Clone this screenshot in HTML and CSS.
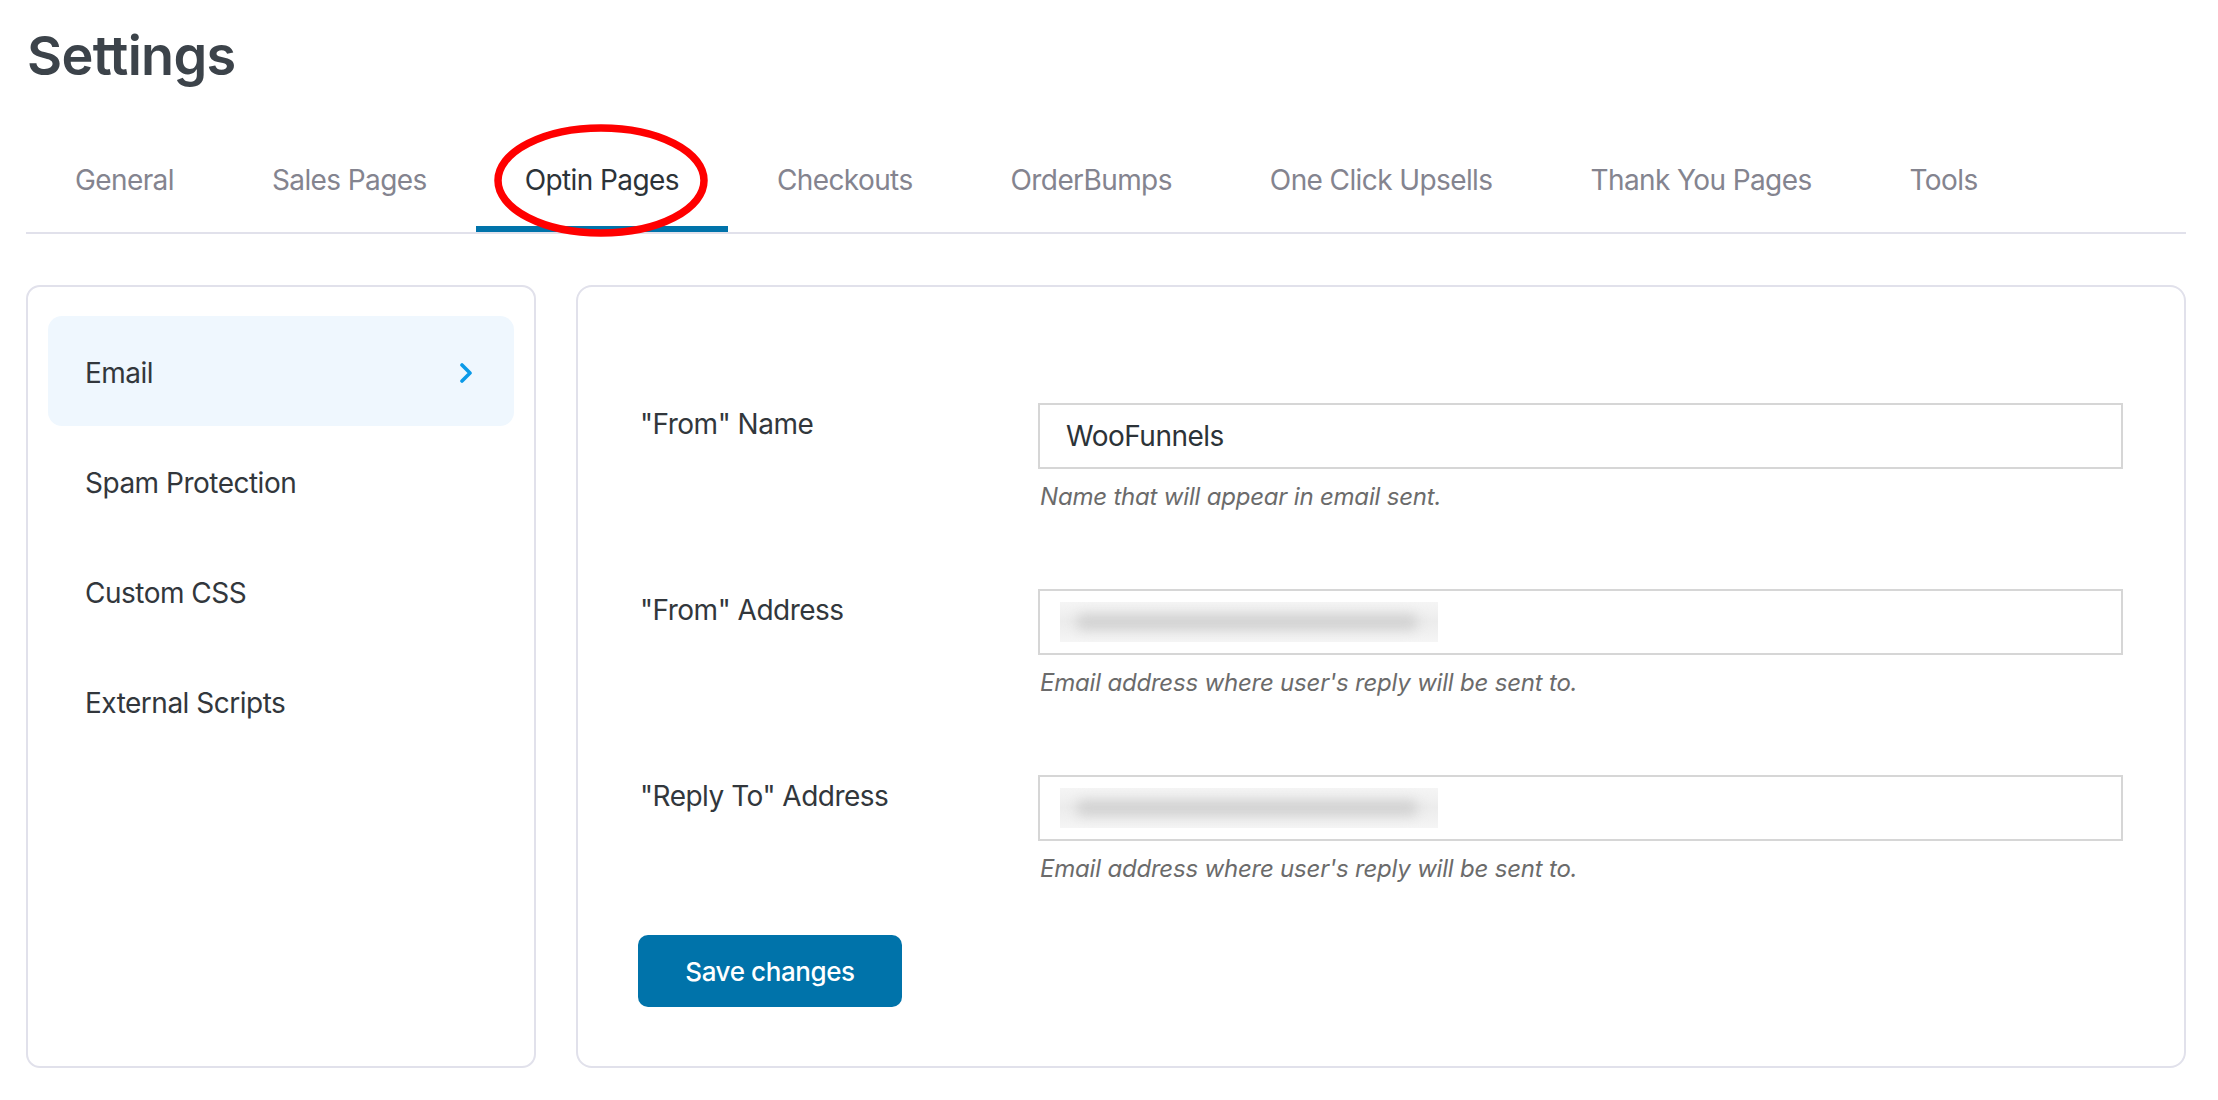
FILE: index.html
```html
<!DOCTYPE html>
<html lang="en">
<head>
<meta charset="utf-8">
<title>Settings</title>
<link rel="stylesheet" href="styles.css">
</head>
<body>
<div class="page">
  <h1 class="title">Settings</h1>
  <nav class="tabs">
    <a class="tab">General</a>
    <a class="tab">Sales Pages</a>
    <a class="tab active">Optin Pages<svg class="annot" width="214" height="113" viewBox="0 0 214 113"><ellipse cx="107" cy="56.5" rx="103" ry="52.5" fill="none" stroke="#ff0000" stroke-width="7.5"/></svg></a>
    <a class="tab">Checkouts</a>
    <a class="tab">OrderBumps</a>
    <a class="tab">One Click Upsells</a>
    <a class="tab">Thank You Pages</a>
    <a class="tab">Tools</a>
  </nav>
  <div class="content">
    <aside class="sidebar">
      <ul class="menu">
        <li class="menu-item active"><span>Email</span><svg class="chev" width="14" height="20" viewBox="0 0 14 20"><polyline points="3,2 11,10 3,18" fill="none" stroke="#0b9ae8" stroke-width="3.6" stroke-linecap="round" stroke-linejoin="round"/></svg></li>
        <li class="menu-item"><span>Spam Protection</span></li>
        <li class="menu-item"><span>Custom CSS</span></li>
        <li class="menu-item"><span>External Scripts</span></li>
      </ul>
    </aside>
    <section class="panel">
      <div class="form">
        <div class="form-row">
          <div class="label">"From" Name</div>
          <div class="control">
            <div class="field">WooFunnels</div>
            <p class="help">Name that will appear in email sent.</p>
          </div>
        </div>
        <div class="form-row">
          <div class="label">"From" Address</div>
          <div class="control">
            <div class="field"><div class="redacted"><div class="redacted-band"></div></div></div>
            <p class="help">Email address where user's reply will be sent to.</p>
          </div>
        </div>
        <div class="form-row">
          <div class="label">"Reply To" Address</div>
          <div class="control">
            <div class="field"><div class="redacted"><div class="redacted-band"></div></div></div>
            <p class="help">Email address where user's reply will be sent to.</p>
          </div>
        </div>
      </div>
      <button class="btn" type="button">Save changes</button>
    </section>
  </div>
</div>
</body>
</html>
```
FILE: styles.css
```css
* { box-sizing: border-box; }

html, body {
  margin: 0;
  padding: 0;
  background: #ffffff;
}

body {
  font-family: Inter, "Noto Sans", "Liberation Sans", sans-serif;
  color: #3c434a;
}

.page {
  padding: 24px 32px 0 26px;
}

.title {
  margin: 0 0 48px 1px;
  font-size: 54px;
  line-height: 64px;
  font-weight: 600;
  color: #3c434a;
  letter-spacing: -0.7px;
}

.tabs {
  display: flex;
  border-bottom: 2px solid #e1e1eb;
}

.tab {
  position: relative;
  display: block;
  padding: 24px 49px 26px;
  font-size: 28px;
  line-height: 40px;
  color: #84848f;
  border-bottom: 6px solid transparent;
  text-decoration: none;
  letter-spacing: -0.6px;
  white-space: nowrap;
}

.tab.active {
  color: #2c3338;
  border-bottom-color: #0073aa;
}

.annot {
  position: absolute;
  left: 18px;
  top: -12px;
  overflow: visible;
}

.content {
  display: flex;
  gap: 40px;
  margin-top: 51px;
}

.sidebar {
  width: 510px;
  flex: none;
  border: 2px solid #e1e1eb;
  border-radius: 14px;
  padding: 29px 20px 20px;
}

.menu {
  list-style: none;
  margin: 0;
  padding: 0;
}

.menu-item {
  display: flex;
  align-items: center;
  justify-content: space-between;
  padding: 37px 41px 33px 37px;
  font-size: 28px;
  line-height: 40px;
  color: #32373c;
  border-radius: 14px;
  letter-spacing: -0.5px;
}

.menu-item.active {
  background: #eff7fe;
}

.chev {
  display: block;
}

.panel {
  flex: 1;
  border: 2px solid #e1e1eb;
  border-radius: 16px;
  padding: 116px 61px 59px 62px;
}

.form {
  display: flex;
  flex-direction: column;
  gap: 74px;
}

.form-row {
  display: grid;
  grid-template-columns: 398px 1fr;
}

.label {
  padding-top: 1px;
  font-size: 28px;
  line-height: 40px;
  color: #32373c;
  letter-spacing: -0.5px;
}

.field {
  display: flex;
  align-items: center;
  height: 66px;
  border: 2px solid #d6d6d6;
  background: #ffffff;
  padding: 0 26px;
  font-size: 28px;
  color: #2c3338;
  letter-spacing: -0.5px;
}

.redacted {
  position: relative;
  width: 378px;
  height: 40px;
  margin-left: -6px;
  background: linear-gradient(180deg, #f5f5f5 0%, #ececec 50%, #f5f5f5 100%);
  overflow: hidden;
}

.redacted-band {
  position: absolute;
  left: 16px;
  right: 20px;
  top: 12px;
  height: 16px;
  border-radius: 8px;
  background: #d2d2d2;
  filter: blur(6px);
}

.help {
  margin: 10px 0 0 2px;
  font-size: 24px;
  line-height: 36px;
  font-style: italic;
  color: #6b6b6b;
  letter-spacing: -0.2px;
}

.btn {
  display: block;
  margin: 48px 0 0 -2px;
  height: 72px;
  width: 264px;
  border: none;
  border-radius: 10px;
  background: #0073aa;
  color: #ffffff;
  font-family: Inter, "Noto Sans", "Liberation Sans", sans-serif;
  font-size: 26px;
  font-weight: 500;
  letter-spacing: -0.4px;
  padding: 0;
  cursor: pointer;
}
```
